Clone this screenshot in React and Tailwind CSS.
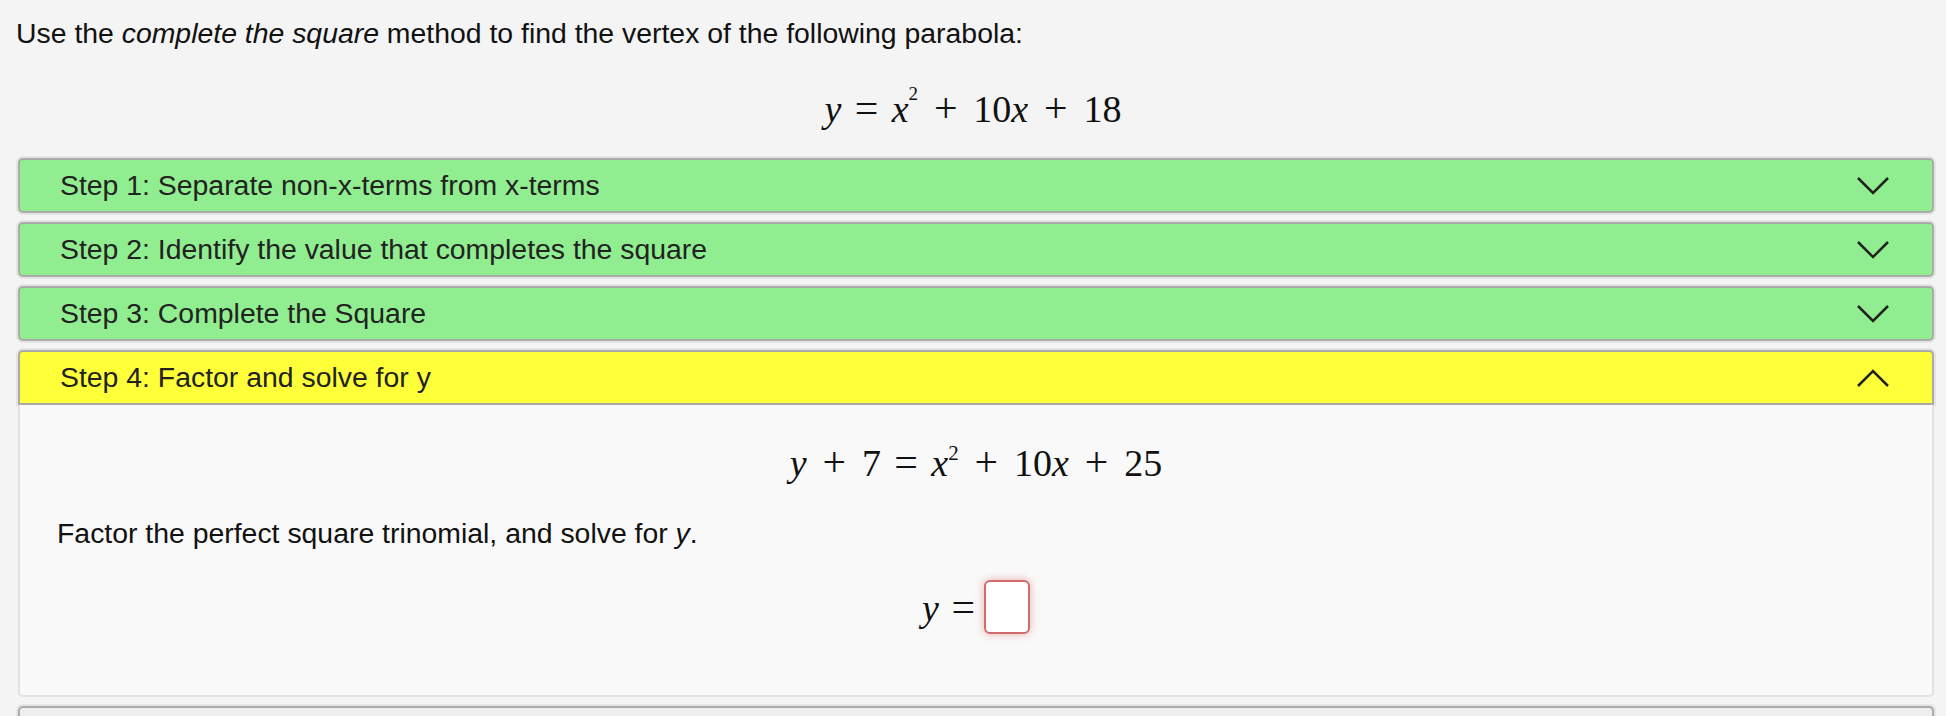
import React from "react";

const sans = { fontFamily: '"Liberation Sans", Arial, sans-serif' };

const Chevron = ({ up }) => (
  <svg width="32" height="18" viewBox="0 0 32 18" fill="none">
    <polyline
      points={up ? "1,17 16,2 31,17" : "1,1 16,16 31,1"}
      stroke="#222"
      strokeWidth="2.5"
    />
  </svg>
);

const V = ({ children }) => <span className="italic">{children}</span>;
const Op = ({ children }) => <span className="mx-[0.38em] text-[1.1em]">{children}</span>;
const Rel = ({ children }) => <span className="mx-[0.32em] text-[1.1em]">{children}</span>;

const Math = ({ children }) => (
  <div
    className="h-[38px] text-[38px] leading-[38px] text-[#111] whitespace-nowrap"
    style={{ fontFamily: '"Liberation Serif", "Times New Roman", serif' }}
  >
    {children}
  </div>
);

const Step = ({ title, open }) => (
  <div
    className={`flex h-[55px] items-center justify-between rounded-[5px] border-2 border-[#aaa] pl-[40px] pr-[43px] shadow-[0_0_0_2px_#e4e4e4] ${
      open ? "rounded-b-none bg-[#ffff3a]" : "bg-[#90ee90]"
    }`}
  >
    <span className="text-[28.4px] text-[#222]">{title}</span>
    <Chevron up={open} />
  </div>
);

export default function App() {
  return (
    <div className="min-h-screen bg-[#f4f4f4] text-[#111]" style={sans}>
      <p className="pl-[16px] pt-[16px] text-[28.4px] leading-[34px]">
        Use the <i>complete the square</i> method to find the vertex of the following parabola:
      </p>

      <div className="flex justify-center pt-[39px] pb-[31px]">
        <Math>
          <V>y</V>
          <Rel>=</Rel>
          <V>x</V>
          <sup className="text-[19px] top-[-1.15em]">2</sup>
          <Op>+</Op>10<V>x</V>
          <Op>+</Op>18
        </Math>
      </div>

      <div className="ml-[18px] mr-[12px] flex flex-col gap-[9px]">
        <Step title="Step 1: Separate non-x-terms from x-terms" />
        <Step title="Step 2: Identify the value that completes the square" />
        <Step title="Step 3: Complete the Square" />
        <div>
          <Step title="Step 4: Factor and solve for y" open />
          <div className="h-[292px] rounded-b-[5px] border-x-2 border-b-2 border-[#e2e2e2] bg-[#f9f9f9]">
            <div className="flex justify-center pt-[38px]">
              <Math>
                <V>y</V>
                <Op>+</Op>7
                <Rel>=</Rel>
                <V>x</V>
                <sup className="text-[21px] top-[-0.75em]">2</sup>
                <Op>+</Op>10<V>x</V>
                <Op>+</Op>25
              </Math>
            </div>
            <p className="mt-[35px] pl-[37px] text-[28.4px] leading-[34px] text-[#111]">
              Factor the perfect square trinomial, and solve for <i>y</i>.
            </p>
            <div className="mt-[30px] flex items-center justify-center gap-[9px]">
              <Math>
                <V>y</V>
                <span className="ml-[0.3em] text-[1.1em]">=</span>
              </Math>
              <div className="h-[54px] w-[46px] rounded-[6px] border-2 border-[#d26b6b] bg-white shadow-[0_0_8px_rgba(220,80,80,0.45)]" />
            </div>
          </div>
        </div>
        <div className="h-[20px] rounded-t-[5px] border-x-2 border-t-2 border-[#aaa] bg-[#eee] shadow-[0_0_0_2px_#e4e4e4]" />
      </div>
    </div>
  );
}
